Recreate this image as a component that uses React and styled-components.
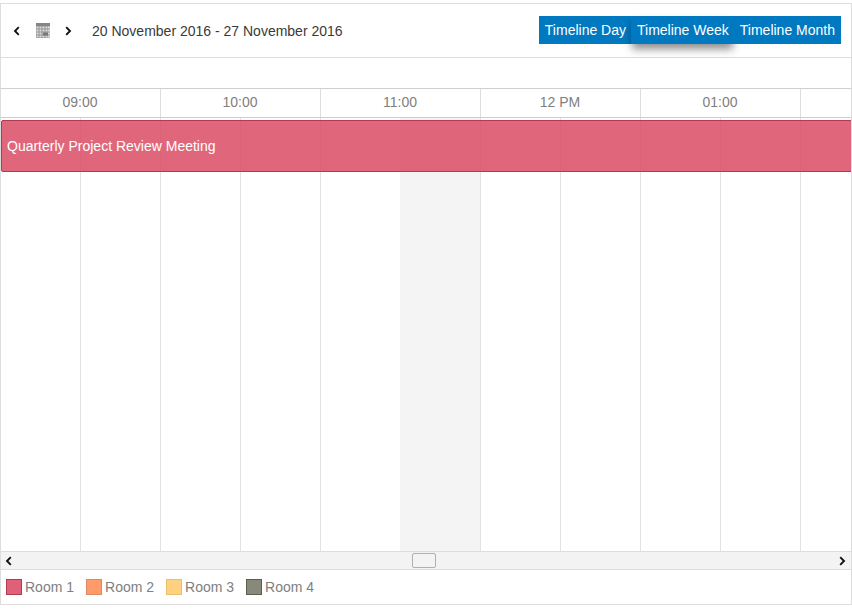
import React from 'react';
import styled, { createGlobalStyle } from 'styled-components';

const Global = createGlobalStyle`
  html, body { margin: 0; padding: 0; background: #fff; }
  body { font-family: "Liberation Sans", Arial, sans-serif; font-size: 14px; }
`;

const Page = styled.div`
  padding-top: 3px;
  width: 852px;
  height: 609px;
  box-sizing: border-box;
`;

const Scheduler = styled.div`
  width: 852px;
  height: 602px;
  box-sizing: border-box;
  border: 1px solid #dddddd;
  display: flex;
  flex-direction: column;
  overflow: hidden;
`;

const Toolbar = styled.div`
  height: 54px;
  flex: none;
  box-sizing: border-box;
  border-bottom: 1px solid #dddddd;
  display: flex;
  align-items: center;
  padding: 0 10px 0 11px;
`;

const NavIcons = styled.div`
  display: flex;
  align-items: center;
  gap: 13px;
`;

const CalendarSlot = styled.span`
  display: block;
  margin-left: 1px;
`;

const DateRange = styled.div`
  margin-left: 19px;
  color: #3a3a3a;
  font-size: 14px;
  padding-top: 1px;
`;

const ViewGroup = styled.div`
  margin-left: auto;
  display: flex;
  height: 28px;
  background: #0079c1;
  border-radius: 1px;
  margin-top: -1px;
`;

const ViewButton = styled.div`
  height: 28px;
  line-height: 28px;
  padding: ${p => (p.$last ? '0 6px' : '0 5px 0 6px')};
  color: #fff;
  font-size: 14px;
  background: #0079c1;
  white-space: nowrap;
  position: relative;
  box-shadow: ${p => (p.$active ? '0 6px 8px -1px rgba(0,0,0,0.45)' : 'none')};
`;

const BlankRow = styled.div`
  height: 31px;
  flex: none;
  box-sizing: border-box;
  border-bottom: 1px solid #cfcfcf;
`;

const HeaderRow = styled.div`
  height: 29px;
  flex: none;
  box-sizing: border-box;
  display: flex;
  border-bottom: 1px solid #cccccc;
`;

const HeaderCell = styled.div`
  width: 160px;
  flex: none;
  box-sizing: border-box;
  border-right: 1px solid #dddddd;
  padding-right: 1px;
  color: #808080;
  font-size: 14px;
  text-align: center;
  line-height: 26px;
`;

const TimelineBody = styled.div`
  position: relative;
  height: 434px;
  flex: none;
  display: flex;
  box-sizing: border-box;
  border-bottom: 1px solid #dddddd;
`;

const SlotCell = styled.div`
  width: 80px;
  flex: none;
  box-sizing: border-box;
  border-right: 1px solid ${p => (p.$before ? '#f4f4f4' : '#e2e2e2')};
  background: ${p => (p.$highlight ? '#f4f4f4' : '#fff')};
`;

const EventBar = styled.div`
  position: absolute;
  left: 0;
  right: -2px;
  top: 2px;
  height: 52px;
  box-sizing: border-box;
  background: rgba(218, 76, 100, 0.85);
  border: 1px solid #b23a52;
  border-radius: 2px;
  color: #fff;
  font-size: 14px;
  line-height: 50px;
  padding-left: 5px;
`;

const ScrollBar = styled.div`
  height: 18px;
  flex: none;
  box-sizing: border-box;
  background: #f3f3f3;
  border-bottom: 1px solid #dddddd;
  display: flex;
  align-items: center;
  justify-content: space-between;
  padding: 0 4px 0 3px;
  position: relative;
`;

const ScrollThumb = styled.div`
  position: absolute;
  left: 411px;
  top: 1px;
  width: 24px;
  height: 15px;
  box-sizing: border-box;
  border: 1px solid #b0b0b0;
  border-radius: 2px;
  background: #f3f3f3;
`;

const Legend = styled.div`
  flex: 1;
  display: flex;
  align-items: center;
  padding-left: 5px;
  gap: 12px;
`;

const LegendItem = styled.div`
  display: flex;
  align-items: center;
  gap: 3px;
  color: #808080;
  font-size: 14px;
`;

const Swatch = styled.span`
  width: 16px;
  height: 16px;
  box-sizing: border-box;
  background: ${p => p.$bg};
  border: 1px solid ${p => p.$border};
`;

const Chevron = ({ dir, size = 10 }) => (
  <svg width={size} height={size} viewBox="0 0 10 10" style={{ display: 'block' }}>
    <path
      d={dir === 'left' ? 'M6.8 1.2 L3 5 L6.8 8.8' : 'M3.2 1.2 L7 5 L3.2 8.8'}
      fill="none"
      stroke="#111"
      strokeWidth="1.9"
    />
  </svg>
);

const CalendarIcon = () => (
  <svg width="14" height="15" viewBox="0 0 14 15" style={{ display: 'block' }}>
    <rect x="0" y="0" width="14" height="15" fill="#949494" />
    <rect x="0" y="0" width="14" height="3" fill="#858585" />
    {[3.5, 6.5, 9.5, 12.5].map(y =>
      [0.5, 3.5, 6.5, 9.5, 12].map(x => (
        <rect key={`${x}-${y}`} x={x} y={y} width="2" height="2" fill="#dcdcdc" />
      ))
    )}
    <rect x="7" y="9.5" width="5" height="3" fill="#777" />
  </svg>
);

const hours = ['09:00', '10:00', '11:00', '12 PM', '01:00', ''];
const rooms = [
  { name: 'Room 1', bg: '#e0607a', border: '#b23a52' },
  { name: 'Room 2', bg: '#ff9a6b', border: '#d98a60' },
  { name: 'Room 3', bg: '#ffd07f', border: '#e8c070' },
  { name: 'Room 4', bg: '#87897a', border: '#5c5e52' },
];

export default function App() {
  return (
    <Page>
      <Global />
      <Scheduler>
        <Toolbar>
          <NavIcons>
            <Chevron dir="left" />
            <CalendarSlot>
              <CalendarIcon />
            </CalendarSlot>
            <Chevron dir="right" />
          </NavIcons>
          <DateRange>20 November 2016 - 27 November 2016</DateRange>
          <ViewGroup>
            <ViewButton>Timeline Day</ViewButton>
            <ViewButton $active>Timeline Week</ViewButton>
            <ViewButton $last>Timeline Month</ViewButton>
          </ViewGroup>
        </Toolbar>
        <BlankRow />
        <HeaderRow>
          {hours.map((h, i) => (
            <HeaderCell key={i}>{h}</HeaderCell>
          ))}
        </HeaderRow>
        <TimelineBody>
          {Array.from({ length: 11 }, (_, i) => (
            <SlotCell key={i} $highlight={i === 5} $before={i === 4} />
          ))}
          <EventBar>Quarterly Project Review Meeting</EventBar>
        </TimelineBody>
        <ScrollBar>
          <Chevron dir="left" />
          <ScrollThumb />
          <Chevron dir="right" />
        </ScrollBar>
        <Legend>
          {rooms.map(r => (
            <LegendItem key={r.name}>
              <Swatch $bg={r.bg} $border={r.border} />
              {r.name}
            </LegendItem>
          ))}
        </Legend>
      </Scheduler>
    </Page>
  );
}
